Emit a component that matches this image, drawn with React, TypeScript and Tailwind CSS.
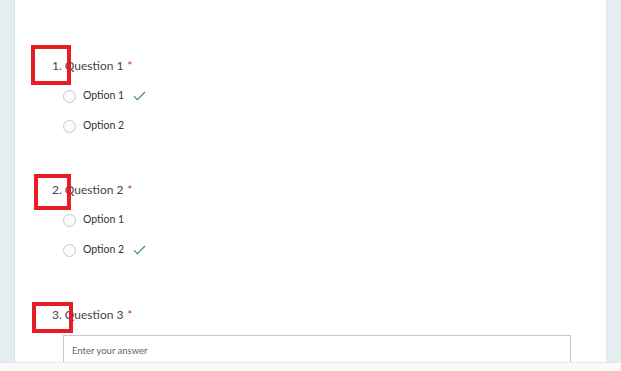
import React from "react";

const font = { fontFamily: 'Lato, "Open Sans", "Noto Sans", sans-serif' };

function Radio({ label, correct }: { label: string; correct?: boolean }) {
  return (
    <div className="flex h-[30px] items-center">
      <span className="h-[13px] w-[13px] rounded-full border border-[#c8c8c8] bg-[#fbfbfb]" />
      <span className="ml-[7px] text-[10.5px] text-[#333]">{label}</span>
      {correct && (
        <svg className="ml-[9px]" width="13" height="10" viewBox="0 0 13 10" fill="none">
          <path d="M1 5.2 L4.3 8.6 L12 1" stroke="#3a8d8a" strokeWidth="1.2" />
        </svg>
      )}
    </div>
  );
}

function Question({ n, children }: { n: number; children?: React.ReactNode }) {
  return (
    <div className="relative">
      <div className="flex h-5 items-center text-[12px] text-[#444]">
        <span>
          {n}.<span className="ml-[3px]">Question {n}</span>
        </span>
        <span className="ml-[4px] text-[11px] text-[#b03030]">*</span>
      </div>
      {children}
    </div>
  );
}

function RedBox({ className }: { className: string }) {
  return <div className={`pointer-events-none absolute border-[4px] border-[#e81c24] ${className}`} />;
}

export default function App() {
  return (
    <div className="flex h-[371px] w-[621px] flex-col bg-[#fafafa]" style={font}>
      <div className="relative flex h-[363px] overflow-hidden border-b border-[#e6e6e6]">
        <div className="w-[15px] shrink-0 border-r border-[#d8e2e5] bg-[#e4eef1]" />
        <div className="flex-1 bg-white pl-[37px] pt-[56px]">
          <Question n={1}>
            <div className="ml-[11px] mt-[5px]">
              <Radio label="Option 1" correct />
              <Radio label="Option 2" />
            </div>
          </Question>
          <div className="mt-[39px]">
            <Question n={2}>
              <div className="ml-[11px] mt-[5px]">
                <Radio label="Option 1" />
                <Radio label="Option 2" correct />
              </div>
            </Question>
          </div>
          <div className="mt-[40px]">
            <Question n={3}>
              <div className="ml-[11px] mt-[10px] h-[40px] w-[508px] border border-[#c8c8c8] px-[8px] pt-[8px] text-[9.5px] text-[#666]">
                Enter your answer
              </div>
            </Question>
          </div>
        </div>
        <div className="w-[15px] shrink-0 border-l border-[#dde7ea] bg-[#e4eef1]" />
        <RedBox className="left-[31px] top-[45px] h-[40px] w-[40px]" />
        <RedBox className="left-[34px] top-[174px] h-[36px] w-[37px]" />
        <RedBox className="left-[32px] top-[302px] h-[31px] w-[41px]" />
      </div>
    </div>
  );
}
